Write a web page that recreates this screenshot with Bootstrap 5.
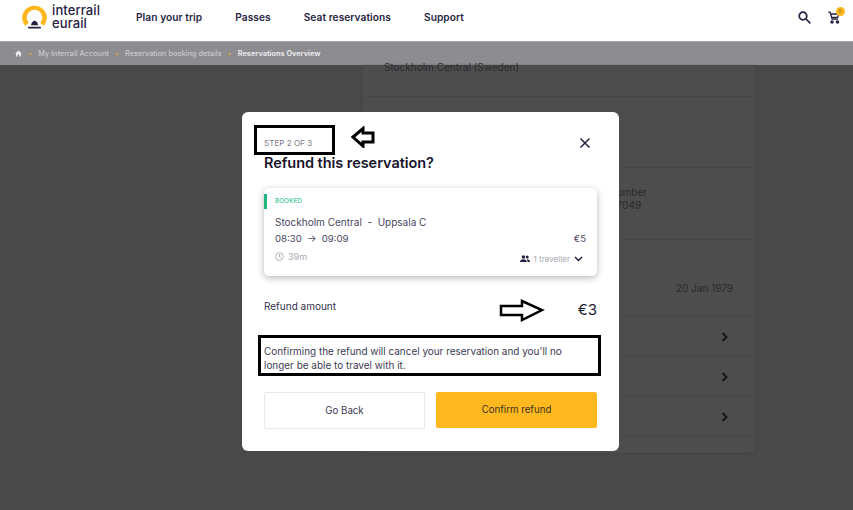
<!DOCTYPE html>
<html lang="en"><head><meta charset="utf-8"><title>Refund</title>
<link href="https://cdn.jsdelivr.net/npm/bootstrap@5.3.0/dist/css/bootstrap.min.css" rel="stylesheet">
<style>
html,body{height:510px;overflow:hidden}
body{font-family:"Inter","Open Sans",sans-serif;background:#494949;color:#2a2740;position:relative;width:853px}
.top{height:41px;background:#fff;padding:0 13px 7px 22px}
.brand{width:82px;margin-right:32px;gap:5px}
.brandtxt{font:500 13px/13px "Inter",sans-serif;color:#25213f;letter-spacing:.1px}
.mainlink{font:600 10.2px/1 "Inter",sans-serif;color:#2a2745;margin-right:33px;letter-spacing:.05px;white-space:nowrap}
.icons{gap:17px}
.crumbs{height:24px;background:#8d8c90;border-top:1px solid #a5a5a8;padding-left:15px;font:500 7.300px/1 "Inter",sans-serif;color:#c9c9cc}
.crumbs b{color:#e6e6e8;font-weight:700}
.sep{color:#f0ad20;margin:0 6.500px;font-size:6px}
.bgcard{margin-left:363px;width:392px;height:388px;background:#4d4d4d;border-radius:0 0 5px 5px;font:400 10px/1 "Inter",sans-serif;color:#2a2a2d;box-shadow:0 1px 3px #444}
.bgrow{border-bottom:1px solid #474747;padding:0 27px 0 21px}
.r1{height:32px;font-size:10px}.r2{height:71px}.r3{height:72px}.r4{height:77px}.r5{height:40px}
.r1 span{margin-top:-28px;color:#2b2b2e}
.numcol{margin:-10px 81px 0 0;line-height:13px;white-space:nowrap;text-align:left}
.datecol{margin:-5px -5px 0 0}
.scrim-box{position:absolute;left:242px;top:112px;width:377px;height:339px;border-radius:6px;border:0;padding:0;background:#fff}
.modalinner{padding:24px 22px 22px}
.stp{font:400 8px/1 "Inter",sans-serif;color:#7c7a8a;letter-spacing:.05px;height:14px;padding-top:3px}
.ttl{font:600 14.5px/1 "Inter",sans-serif;color:#17152b;margin:6px 0 17px;letter-spacing:-.05px}
.xbtn{position:absolute;left:337px;top:25px}
.tripcard{height:88px;border-radius:5px;box-shadow:0 2px 7px rgba(0,0,0,.28);position:relative;padding:0 11px 0 11px;color:#4a4660}
.flag{position:absolute;left:0;top:6px;width:3px;height:15px;background:#1fb57d}
.booked{font:500 6.400px/1 "Inter",sans-serif;color:#45c796;padding-top:10px;height:29px}
.route{font:400 10px/1 "Inter",sans-serif;height:17px}
.times{font:400 9.600px/1 "Inter",sans-serif;height:17px}
.dur{font:400 9px/1 "Inter",sans-serif;color:#a9a8b2}
.trav{font:400 8.100px/1 "Inter",sans-serif;color:#a9a8b2;margin:4px 3px 0 0}
.amt{margin-top:25px;height:36px;font:400 10px/1 "Inter",sans-serif;color:#33304a}
.amt b{font:400 15px/1 "Inter",sans-serif;color:#1d1b30;margin-top:1px}
.note{font:400 9.950px/14px "Inter",sans-serif;color:#3d3a52;margin:0 0 23px;height:32px;padding-top:7px;width:315px}
.actions{gap:11px}
.btn-back,.btn-conf{width:161px;height:37px;font:400 9.700px/1 "Inter",sans-serif;border-radius:2px;color:#3b3850}
.btn-back{background:#fff;border:1px solid #e7e7ea;padding:2px 0 0}
.btn-conf{background:#ffb81f;border:1px solid #ffb81f;color:#3a3220;height:36px;padding:1px 0 0}
.annot{position:absolute;border:3px solid #000;pointer-events:none}
.a1{left:254px;top:125px;width:81px;height:30px}
.a2{left:258px;top:335px;width:343px;height:41px}
.arrow{position:absolute}
.a-left{left:350px;top:126px}
.a-right{left:498px;top:299px}
.cartbadge{position:absolute;left:835.500px;top:6.500px;width:9px;height:9px;border-radius:50%;background:#ffb81f;color:#8a6a10;font:500 5px/9px "Inter",sans-serif;text-align:center}
</style></head><body>
<nav class="top d-flex align-items-center">
 <div class="brand d-flex align-items-center">
  <svg width="25" height="25" viewBox="0 0 25 25" class="flex-shrink-0"><path d="M3.200 21A12.300 12.300 0 1 1 21.800 21L18.300 17.800A7.800 7.800 0 1 0 6.700 17.800Z" fill="#fdb71c"/><path d="M9 20.300c.6-3.100 2-4.600 3.600-4.600s3 1.500 3.600 4.600Z" fill="#25213f"/><rect x="6" y="21.800" width="13" height="1.700" rx=".8" fill="#25213f"/></svg>
  <div class="brandtxt">interrail<br>eurail</div>
 </div>
 <a class="mainlink text-decoration-none" href="#">Plan your trip</a>
 <a class="mainlink text-decoration-none" href="#">Passes</a>
 <a class="mainlink text-decoration-none" href="#">Seat reservations</a>
 <a class="mainlink text-decoration-none" href="#">Support</a>
 <div class="ms-auto d-flex align-items-center icons">
  <svg width="13" height="13" viewBox="0 0 13 13" fill="none" stroke="#25213f" stroke-width="1.700"><circle cx="5" cy="5" r="3.800"/><path d="M8 8 12.300 12.300"/></svg>
  <svg width="12" height="13" viewBox="0 0 12 13" fill="none" stroke="#25213f" stroke-width="1.300"><path d="M.3 1.200h1.800l2 6.800h5.800M2.700 3H11L9.600 6.300H3.800"/><circle cx="4" cy="11" r="1.100" fill="#25213f"/><circle cx="9.500" cy="11" r="1.100" fill="#25213f"/></svg>
 </div>
</nav>
<div class="cartbadge">0</div>
<div class="crumbs d-flex align-items-center">
 <svg width="7" height="7" viewBox="0 0 8 8"><path d="M4 .5 8 4H6.800V7.500H5V5H3v2.500H1.200V4H0Z" fill="#eee"/></svg>
 <span class="sep">•</span><span>My Interrail Account</span><span class="sep">•</span><span>Reservation booking details</span><span class="sep">•</span><b>Reservations Overview</b>
</div>
<main class="bgcard">
 <div class="bgrow r1 d-flex align-items-center"><span>Stockholm Central (Sweden)</span></div>
 <div class="bgrow r2"></div>
 <div class="bgrow r3 d-flex justify-content-end align-items-center"><div class="numcol">umber<br>7049</div></div>
 <div class="bgrow r4 d-flex justify-content-end align-items-center pt-4"><span class="datecol">20 Jan 1979</span></div>
 <div class="bgrow r5 d-flex justify-content-end align-items-center"><svg width="7" height="10" viewBox="0 0 7 10" fill="none" stroke="#151515" stroke-width="1.800"><path d="M1.500 1 5.500 5 1.500 9"/></svg></div>
 <div class="bgrow r5 d-flex justify-content-end align-items-center"><svg width="7" height="10" viewBox="0 0 7 10" fill="none" stroke="#151515" stroke-width="1.800"><path d="M1.500 1 5.500 5 1.500 9"/></svg></div>
 <div class="bgrow r5 d-flex justify-content-end align-items-center"><svg width="7" height="10" viewBox="0 0 7 10" fill="none" stroke="#151515" stroke-width="1.800"><path d="M1.500 1 5.500 5 1.500 9"/></svg></div>
</main>
<section class="modal-content scrim-box">
 <div class="modalinner">
  <div class="stp">STEP 2 OF 3</div>
  <h1 class="ttl">Refund this reservation?</h1>
  <svg class="xbtn" width="12" height="12" viewBox="0 0 12 12" stroke="#25213f" stroke-width="1.500"><path d="M1.500 1.500 10.500 10.500M10.500 1.500 1.500 10.500"/></svg>
  <div class="tripcard bg-white">
   <div class="flag"></div>
   <div class="booked">BOOKED</div>
   <div class="route">Stockholm Central &nbsp;-&nbsp; Uppsala C</div>
   <div class="times d-flex justify-content-between"><span>08:30 &nbsp;→&nbsp; 09:09</span><span>€5</span></div>
   <div class="d-flex justify-content-between">
    <span class="dur d-flex align-items-center gap-1"><svg width="9" height="9" viewBox="0 0 9 9" fill="none" stroke="#a9a8b2" stroke-width=".9"><circle cx="4.500" cy="4.500" r="3.800"/><path d="M4.500 2.200V4.800L6.200 5.800"/></svg>39m</span>
    <span class="trav d-flex align-items-center gap-1"><svg width="10" height="8" viewBox="0 0 10 8" fill="#25213f"><circle cx="3.400" cy="2" r="1.700"/><circle cx="7.200" cy="2" r="1.500"/><path d="M0 7c0-2 1.500-2.800 3.400-2.800S6.800 5 6.800 7ZM7.600 7c0-1.200-.3-2-1-2.700C8.400 4 10 5 10 7Z"/></svg>1 traveller <svg width="9" height="6" viewBox="0 0 9 6" fill="none" stroke="#25213f" stroke-width="1.500"><path d="M1 1 4.500 4.500 8 1"/></svg></span>
   </div>
  </div>
  <div class="amt d-flex justify-content-between"><span>Refund amount</span><b>€3</b></div>
  <p class="note">Confirming the refund will cancel your reservation and you'll no longer be able to travel with it.</p>
  <div class="actions d-flex align-items-start">
   <button class="btn btn-back">Go Back</button>
   <button class="btn btn-conf">Confirm refund</button>
  </div>
 </div>
</section>
<div class="annot a1"></div>
<div class="annot a2"></div>
<svg class="arrow a-left" width="25" height="22" viewBox="0 0 25 22"><path d="M3 11 13 2.500V7H23V16H13V20Z" fill="#fff" stroke="#000" stroke-width="3"/></svg>
<svg class="arrow a-right" width="48" height="24" viewBox="0 0 48 24"><path d="M3 7H24V2L44 11 24 21V16H3Z" fill="#fff" stroke="#000" stroke-width="2.500"/></svg>
<script src="https://cdn.jsdelivr.net/npm/bootstrap@5.3.0/dist/js/bootstrap.bundle.min.js"></script>
</body></html>
